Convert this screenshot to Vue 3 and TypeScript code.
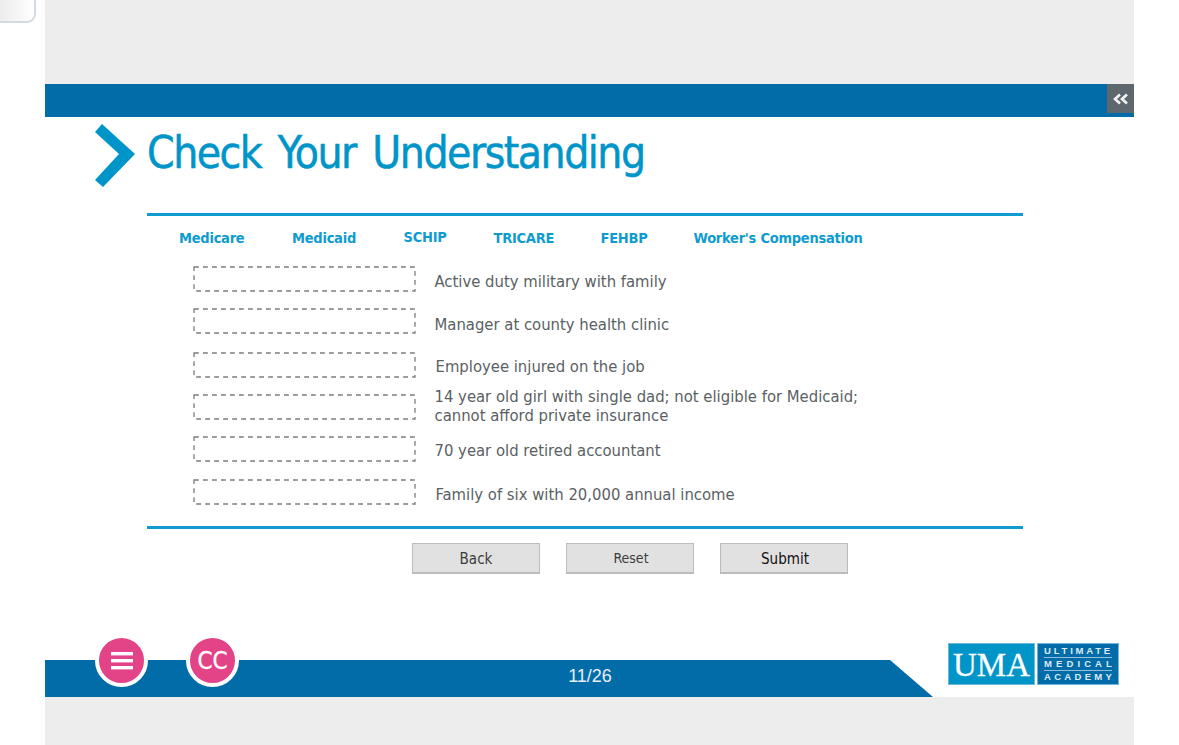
<script setup lang="ts">
interface Row { gap: number; lines: string[]; shift: number; dy: number }
const tabs: string[] = ['Medicare', 'Medicaid', 'SCHIP', 'TRICARE', 'FEHBP', "Worker's Compensation"]
const rows: Row[] = [
  { gap: 0, lines: ['Active duty military with family'], shift: 0, dy: 2 },
  { gap: 16, lines: ['Manager at county health clinic'], shift: 0, dy: 3 },
  { gap: 18, lines: ['Employee injured on the job'], shift: 1, dy: 1 },
  { gap: 16, lines: ['14 year old girl with single dad; not eligible for Medicaid;', 'cannot afford private insurance'], shift: 0, dy: -1 },
  { gap: 16, lines: ['70 year old retired accountant'], shift: 0, dy: 1 },
  { gap: 17, lines: ['Family of six with 20,000 annual income'], shift: 1, dy: 2 },
]
const buttons = [
  { label: 'Back', cls: 'back' },
  { label: 'Reset', cls: 'reset' },
  { label: 'Submit', cls: 'submit' },
]
</script>

<template>
  <div class="corner"></div>
  <main class="stage">
    <div class="top-gray"></div>
    <header class="top-bar">
      <button class="collapse" aria-label="Collapse">
        <svg width="16" height="12" viewBox="0 0 16 12" fill="none" stroke="#f4f4f4" stroke-width="2.6">
          <path d="M7 1.5 2 6l5 4.5M14 1.5 9 6l5 4.5" />
        </svg>
      </button>
    </header>

    <section class="slide">
      <div class="title-row">
        <svg class="chevron" width="42" height="64" viewBox="0 0 42 64">
          <path d="M8 0 41 30 9 63 1 56 25 30 1 8Z" fill="#0095c9" />
        </svg>
        <h1>Check Your Understanding</h1>
      </div>

      <div class="panel">
        <div class="tabs">
          <span v-for="t in tabs" :key="t" class="tab" :class="{ raised: t === 'SCHIP' }">{{ t }}</span>
        </div>
        <div class="rows">
          <div v-for="r in rows" :key="r.lines[0]" class="row" :style="{ marginTop: r.gap + 'px' }">
            <svg class="drop" width="223" height="26" viewBox="0 0 223 26" fill="none">
              <rect x="1" y="1" width="221" height="24" stroke="#7c7c7c" stroke-width="1.3" stroke-dasharray="4.8 4.2" />
            </svg>
            <p class="text" :style="{ marginLeft: 18.5 + r.shift + 'px', marginTop: r.dy * 2 + 'px' }">
              <span v-for="l in r.lines" :key="l" class="line">{{ l }}</span>
            </p>
          </div>
        </div>
      </div>

      <div class="actions">
        <button v-for="b in buttons" :key="b.label" class="btn" :class="b.cls">{{ b.label }}</button>
      </div>
    </section>

    <footer class="footer">
      <div class="bar">11/26</div>
      <button class="round menu" aria-label="Menu">
        <svg width="22" height="18" viewBox="0 0 22 18" fill="#fff">
          <rect x="0" y="0" width="22" height="3.4" /><rect x="0" y="7" width="22" height="3.4" /><rect x="0" y="14" width="22" height="3.4" />
        </svg>
      </button>
      <button class="round cc">CC</button>
      <div class="logo">
        <span class="logo-a">UMA</span>
        <span class="logo-b">
          <span class="l1">ULTIMATE</span><span class="l2">MEDICAL</span><span class="l3">ACADEMY</span>
        </span>
      </div>
    </footer>
    <div class="bottom-gray"></div>
  </main>
</template>

<style>
html, body { margin: 0; background: #fff; overflow: hidden; }
</style>

<style scoped>
.stage {
  width: 1089px;
  margin-left: 45px;
  height: 745px;
  display: flex;
  flex-direction: column;
  font-family: "DejaVu Sans", sans-serif;
  font-stretch: condensed;
}
.corner {
  position: absolute;
  left: -20px;
  top: -20px;
  width: 52px;
  height: 39px;
  border: 2.5px solid #d3d9e2;
  border-radius: 9px;
  background: linear-gradient(90deg, #e2e2e2, #fff);
}
.top-gray { height: 84px; background: #ededed; }
.top-bar {
  height: 33px;
  background: #026ca8;
  display: flex;
  justify-content: flex-end;
  align-items: flex-start;
}
.collapse {
  width: 27px;
  height: 29px;
  padding: 0;
  border: 0;
  background: #5f676e;
  display: flex;
  align-items: center;
  justify-content: center;
}
.slide { height: 543px; display: flex; flex-direction: column; }
.title-row {
  display: flex;
  align-items: flex-start;
  padding: 7px 0 0 49px;
  height: 89px;
  box-sizing: border-box;
}
.chevron { flex: none; }
h1 {
  margin: 1px 0 0 11px;
  font-size: 44px;
  line-height: 56px;
  font-weight: 400;
  letter-spacing: -1.5px;
  word-spacing: 5.5px;
  -webkit-text-stroke: 0.5px #0095c9;
  color: #0095c9;
  white-space: nowrap;
}
.panel {
  margin: 7px 0 0 102px;
  width: 876px;
  height: 316px;
  box-sizing: border-box;
  border-top: 3px solid #0f9bd0;
  border-bottom: 3px solid #0f9bd0;
}
.tabs {
  display: grid;
  grid-template-columns: 113px 111.5px 90px 107px 93px auto;
  justify-content: start;
  padding: 12px 0 0 32px;
  height: 36px;
  box-sizing: border-box;
}
.tab {
  font-size: 14.5px;
  line-height: 20px;
  font-weight: 700;
  letter-spacing: -0.25px;
  color: #0f9bd0;
  white-space: nowrap;
}
.raised { margin-top: -1px; }
.rows { padding: 14px 0 0 46px; }
.row { display: flex; align-items: center; height: 26px; }
.drop { flex: none; display: block; }
.text { margin: 0; font-size: 16.5px; line-height: 19px; color: #5a5f63; white-space: nowrap; }
.line { display: block; }
.actions {
  display: flex;
  gap: 26px;
  margin: 14px 0 0 367px;
}
.btn {
  width: 128px;
  height: 31px;
  padding: 1px 0 0;
  background: #e1e1e1;
  border: 1px solid #bcbcbc;
  border-bottom-width: 2px;
  font-family: inherit;
  font-stretch: condensed;
  font-size: 15px;
  color: #3c3c3c;
}
.reset { font-size: 14px; padding: 0 0 0 2px; }
.submit { color: #111; padding-left: 2px; }
.footer { position: relative; height: 37px; }
.bar {
  width: 888px;
  height: 37px;
  background: #026ca8;
  clip-path: polygon(0 0, 845px 0, 100% 100%, 0 100%);
  color: #e8f0f5;
  font-family: "Liberation Sans", sans-serif;
  font-size: 18px;
  line-height: 33px;
  text-align: center;
  padding-left: 202px;
  box-sizing: border-box;
}
.round {
  position: absolute;
  top: -26px;
  width: 45px;
  height: 45px;
  box-sizing: content-box;
  padding: 0;
  border: 4px solid #fff;
  border-radius: 50%;
  background: #e34487;
  color: #fff;
  display: flex;
  align-items: center;
  justify-content: center;
  font-family: inherit;
  font-stretch: condensed;
  font-size: 24px;
  -webkit-text-stroke: 0.3px #fff;
}
.menu { left: 50px; }
.cc { left: 141px; }
.logo {
  position: absolute;
  left: 903px;
  top: -17px;
  display: flex;
  gap: 2px;
  height: 42px;
}
.logo-a {
  width: 87px;
  background: #0095c9;
  border: 1px solid #6cb9da;
  box-sizing: border-box;
  color: #fff;
  font-family: "Liberation Serif", serif;
  font-size: 33px;
  -webkit-text-stroke: 0.3px #fff;
  line-height: 42px;
  text-align: center;
}
.logo-b {
  width: 82px;
  background: #026ca8;
  border: 1px solid #6cb9da;
  box-sizing: border-box;
  color: #dcebf4;
  font-family: "Liberation Sans", sans-serif;
  font-size: 9.5px;
  font-weight: 700;
  line-height: 12px;
  display: flex;
  flex-direction: column;
  justify-content: center;
  padding: 0 6px;
  white-space: nowrap;
}
.l1 { letter-spacing: 2.8px; }
.l2 {
  letter-spacing: 4.1px;
  border-top: 1.5px solid #8ebfdc;
  border-bottom: 1.5px solid #8ebfdc;
}
.l3 { letter-spacing: 3.3px; }
.bottom-gray { flex: 1; background: #ededed; }
</style>
